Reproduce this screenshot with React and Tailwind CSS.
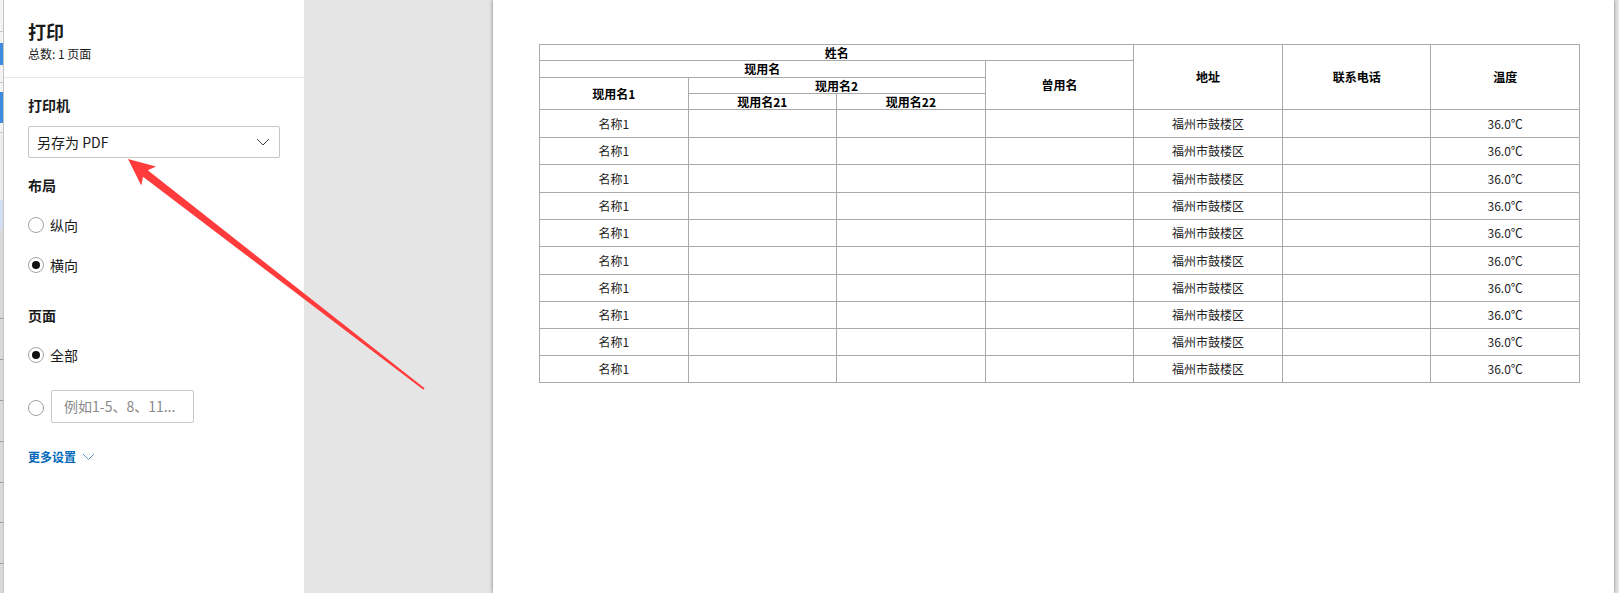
import React from "react";

const FONT = "font-['Noto_Sans_CJK_SC','Noto_Sans',sans-serif]";

function Radio({ checked }) {
  return (
    <span className="flex h-[16px] w-[16px] shrink-0 items-center justify-center rounded-full border border-[#a3a3a3] bg-white">
      {checked && <span className="h-[8px] w-[8px] rounded-full bg-[#111]" />}
    </span>
  );
}

function LeftStrip() {
  const lineYs = [318, 359, 400, 441, 482, 522, 563];
  return (
    <div className="relative w-[4px] shrink-0 border-r border-[#c4c4c4] bg-[#f2f2f2]">
      <div className="flex flex-col">
        <div className="h-[31px] bg-[#f3f3f3]" />
        <div className="h-[1px] bg-[#c8c8c8]" />
        <div className="h-[11px] bg-[#f3f3f3]" />
        <div className="h-[22px] bg-[#3d8be0]" />
        <div className="h-[17px] bg-[#f3f3f3]" />
        <div className="h-[1px] bg-[#c8c8c8]" />
        <div className="h-[9px] bg-[#f3f3f3]" />
        <div className="h-[31px] bg-[#3d8be0]" />
        <div className="h-[9px] bg-[#f3f3f3]" />
        <div className="h-[1px] bg-[#c8c8c8]" />
        <div className="h-[67px] bg-[#ededed]" />
        <div className="h-[30px] bg-[#d3dff0]" />
        <div className="h-[363px] bg-[#d9d9d9]" />
      </div>
      {lineYs.map((y) => (
        <div key={y} className="absolute left-0 right-0 h-[1px] bg-[#9c9c9c]" style={{ top: y }} />
      ))}
    </div>
  );
}

function Panel() {
  return (
    <div className="flex w-[300px] shrink-0 flex-col bg-white text-[#1a1a1a]">
      <div className="h-[78px] border-b border-[#e6e6e6] px-6 pt-[18px]">
        <div className="text-[18px] font-bold leading-[26px]">打印</div>
        <div className="mt-[2px] text-[12px] leading-[16px]">总数: 1 页面</div>
      </div>
      <div className="px-6">
        <div className="mt-[17px] text-[14px] font-semibold leading-[20px]">打印机</div>
        <div className="mt-[11px] flex h-[32px] items-center justify-between rounded-[2px] border border-[#c6c6c6] pl-[8px] pr-[9px] text-[14px]">
          <span>另存为 PDF</span>
          <svg width="14" height="8" viewBox="0 0 14 8" fill="none">
            <path d="M1 1 L7 7 L13 1" stroke="#444" strokeWidth="1" />
          </svg>
        </div>
        <div className="mt-[17px] text-[14px] font-semibold leading-[20px]">布局</div>
        <div className="mt-[10px] flex h-[40px] items-center gap-[6px] text-[14px]">
          <Radio />
          <span>纵向</span>
        </div>
        <div className="flex h-[40px] items-center gap-[6px] text-[14px]">
          <Radio checked />
          <span>横向</span>
        </div>
        <div className="mt-[20px] text-[14px] font-semibold leading-[20px]">页面</div>
        <div className="mt-[10px] flex h-[40px] items-center gap-[6px] text-[14px]">
          <Radio checked />
          <span>全部</span>
        </div>
        <div className="mt-[13px] flex h-[36px] items-center gap-[7px] text-[14px]">
          <div className="mt-[4px]">
            <Radio />
          </div>
          <div className="flex h-[33px] w-[143px] items-center rounded-[2px] border border-[#c8c8c8] pl-[12px] text-[#8a8a8a]">
            例如1-5、8、11...
          </div>
        </div>
        <div className="mt-[23px] flex items-center gap-[6px] text-[12px] font-semibold leading-[20px] text-[#0067b8]">
          <span>更多设置</span>
          <svg width="13" height="8" viewBox="0 0 13 8" fill="none">
            <path d="M1 1 L6.5 6.5 L12 1" stroke="#5b93d3" strokeWidth="1" />
          </svg>
        </div>
      </div>
    </div>
  );
}

const H = "flex items-center justify-center border-r border-b border-[#aaaaaa] text-[12px] font-bold leading-none text-black";
const D = "flex items-center justify-center border-r border-b border-[#aaaaaa] text-[12px] leading-none text-[#222]";

function DataTable() {
  const rows = Array.from({ length: 10 });
  return (
    <div className="grid w-[1041px] grid-cols-[repeat(7,minmax(0,1fr))] grid-rows-[16px_17px_16px_16px_28px_27px_28px_27px_27px_28px_27px_27px_27px_27px] border-l border-t border-[#aaaaaa]">
      <div className={`${H} col-start-1 col-span-4 row-start-1`}>姓名</div>
      <div className={`${H} col-start-5 row-start-1 row-span-4`}>地址</div>
      <div className={`${H} col-start-6 row-start-1 row-span-4`}>联系电话</div>
      <div className={`${H} col-start-7 row-start-1 row-span-4`}>温度</div>
      <div className={`${H} col-start-1 col-span-3 row-start-2`}>现用名</div>
      <div className={`${H} col-start-4 row-start-2 row-span-3`}>曾用名</div>
      <div className={`${H} col-start-1 row-start-3 row-span-2`}>现用名1</div>
      <div className={`${H} col-start-2 col-span-2 row-start-3`}>现用名2</div>
      <div className={`${H} col-start-2 row-start-4`}>现用名21</div>
      <div className={`${H} col-start-3 row-start-4`}>现用名22</div>
      {rows.map((_, i) => (
        <React.Fragment key={i}>
          <div className={D}>名称1</div>
          <div className={D} />
          <div className={D} />
          <div className={D} />
          <div className={D}>福州市鼓楼区</div>
          <div className={D} />
          <div className={D}>36.0℃</div>
        </React.Fragment>
      ))}
    </div>
  );
}

function Arrow() {
  return (
    <svg className="pointer-events-none absolute left-0 top-0" width="1619" height="593" viewBox="0 0 1619 593">
      <polygon
        points="128,159 156,166.5 147.8,170.3 424.6,388.2 423.4,389.8 143,176.7 141.3,185.5"
        fill="#ff3b3b"
      />
    </svg>
  );
}

export default function App() {
  return (
    <div className={`relative flex h-[593px] w-[1619px] overflow-hidden bg-white ${FONT}`}>
      <LeftStrip />
      <Panel />
      <div className="flex flex-1 bg-[#e5e5e5] pl-[189px] pr-[5px]">
        <div className="flex-1 bg-white pl-[46px] pt-[44px] shadow-[0_0_4px_rgba(0,0,0,0.45)]">
          <DataTable />
        </div>
      </div>
      <Arrow />
    </div>
  );
}
